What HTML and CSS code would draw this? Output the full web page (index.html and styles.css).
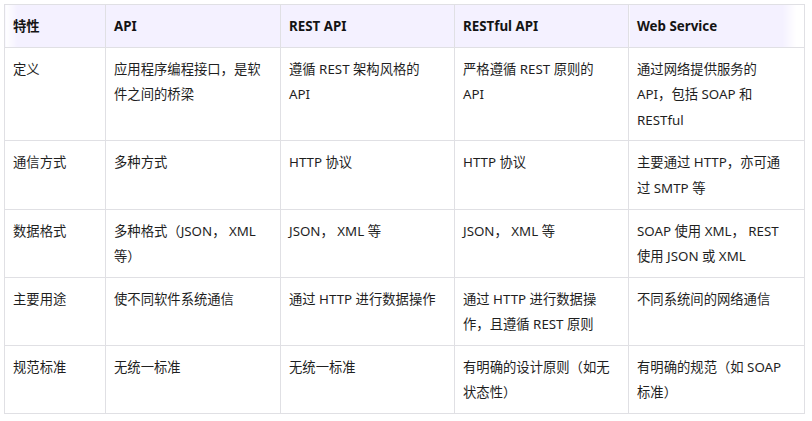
FILE: index.html
```html
<!DOCTYPE html>
<html lang="zh-CN">
<head>
<meta charset="utf-8">
<title>API 对比</title>
<link rel="stylesheet" href="styles.css">
</head>
<body>
<table class="cmp">
  <colgroup>
    <col class="c1"><col class="c2"><col class="c3"><col class="c4"><col class="c5">
  </colgroup>
  <thead>
    <tr>
      <th>特性</th>
      <th>API</th>
      <th>REST API</th>
      <th>RESTful API</th>
      <th>Web Service</th>
    </tr>
  </thead>
  <tbody>
    <tr>
      <td>定义</td>
      <td>应用程序编程接口，是软件之间的桥梁</td>
      <td>遵循 REST 架构风格的 API</td>
      <td>严格遵循 REST 原则的 API</td>
      <td>通过网络提供服务的 API，包括 SOAP 和 RESTful</td>
    </tr>
    <tr>
      <td>通信方式</td>
      <td>多种方式</td>
      <td>HTTP 协议</td>
      <td>HTTP 协议</td>
      <td>主要通过 HTTP，亦可通过 SMTP 等</td>
    </tr>
    <tr>
      <td>数据格式</td>
      <td>多种格式（JSON， XML 等）</td>
      <td>JSON， XML 等</td>
      <td>JSON， XML 等</td>
      <td>SOAP 使用 XML， REST 使用 JSON 或 XML</td>
    </tr>
    <tr>
      <td>主要用途</td>
      <td>使不同软件系统通信</td>
      <td>通过 HTTP 进行数据操作</td>
      <td>通过 HTTP 进行数据操作，且遵循 REST 原则</td>
      <td>不同系统间的网络通信</td>
    </tr>
    <tr>
      <td>规范标准</td>
      <td>无统一标准</td>
      <td>无统一标准</td>
      <td>有明确的设计原则（如无状态性）</td>
      <td>有明确的规范（如 SOAP 标准）</td>
    </tr>
  </tbody>
</table>
</body>
</html>
```

FILE: styles.css
```css
html, body {
  margin: 0;
  background: #ffffff;
}
body {
  padding: 4px;
  font-family: "Noto Sans", "Noto Sans CJK SC", sans-serif;
  font-size: 13.33px;
  color: #1f1f1f;
}
.cmp {
  border-collapse: collapse;
  table-layout: fixed;
  width: 800px;
}
.c1 { width: 101px; }
.c2 { width: 175px; }
.c3 { width: 174px; }
.c4 { width: 174px; }
.c5 { width: 176px; }
.cmp th, .cmp td {
  border: 1px solid #e0e0e4;
  padding: 9px 13px 7.2px 8px;
  line-height: 25.5px;
  text-align: left;
  vertical-align: top;
  word-break: break-word;
}
.cmp th {
  font-weight: 700;
  color: #141414;
  background: #f4f1ff;
}
.cmp th:first-child {
  background: linear-gradient(to right, #ffffff 0px, #f4f1ff 12px);
}
.cmp th:last-child {
  background: linear-gradient(to left, #ffffff 8px, #f4f1ff 22px);
}
```
